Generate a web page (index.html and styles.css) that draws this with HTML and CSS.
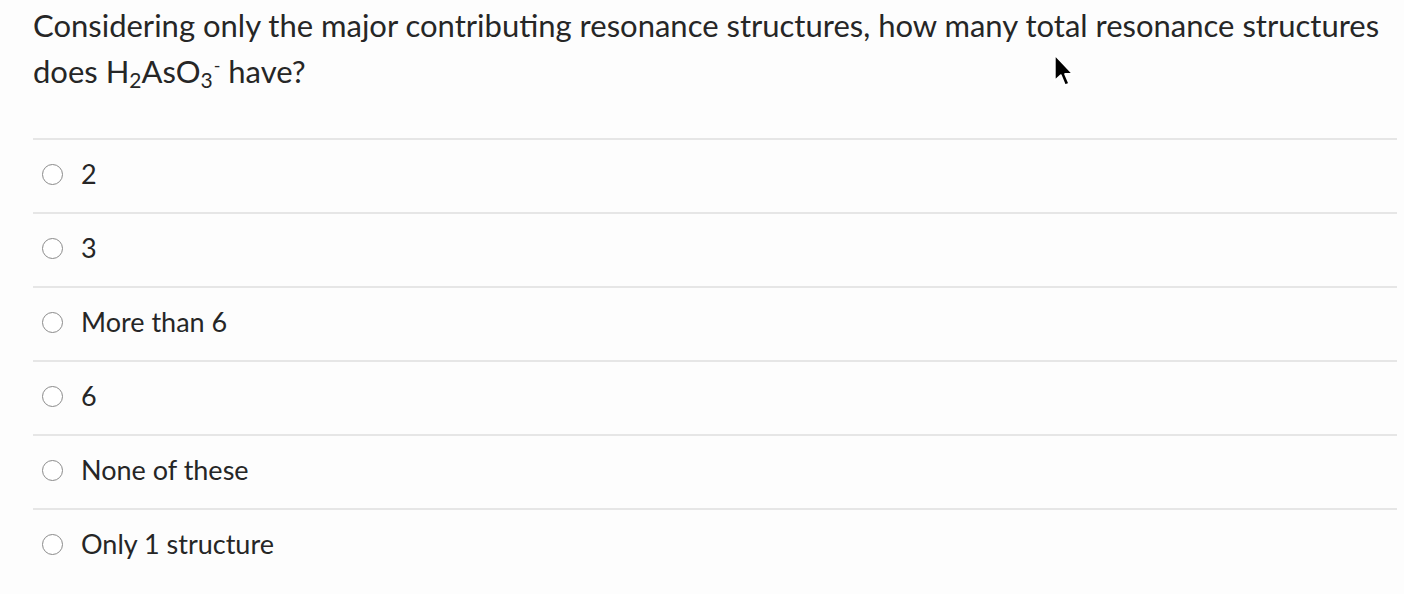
FILE: index.html
```html
<!DOCTYPE html>
<html>
<head>
<meta charset="utf-8">
<link rel="stylesheet" href="styles.css">
</head>
<body>
<div class="quiz">
  <p class="question">Considering only the major contributing resonance structures, how many total resonance structures does H<sub>2</sub>AsO<sub>3</sub><sup>-</sup> have?</p>
  <ul class="answers">
    <li class="answer"><span class="radio"></span><span class="label">2</span></li>
    <li class="answer"><span class="radio"></span><span class="label">3</span></li>
    <li class="answer"><span class="radio"></span><span class="label">More than 6</span></li>
    <li class="answer"><span class="radio"></span><span class="label">6</span></li>
    <li class="answer"><span class="radio"></span><span class="label">None of these</span></li>
    <li class="answer"><span class="radio"></span><span class="label">Only 1 structure</span></li>
  </ul>
  <svg class="cursor" width="24" height="36" viewBox="0 0 20 30">
    <path d="M1.5 1.5 L1.5 23 L6.5 18.5 L10 27 L13.5 25.5 L10 17.5 L16.5 17.5 Z" fill="#000" stroke="#fff" stroke-width="1.5" stroke-linejoin="round"/>
  </svg>
</div>
</body>
</html>
```
FILE: styles.css
```css
html, body {
  margin: 0;
  padding: 0;
  background: #fdfdfd;
}
body {
  font-family: Lato, "Noto Sans", sans-serif;
  color: #262626;
}
.quiz {
  position: relative;
  width: 1364px;
  padding: 2px 0 0 33px;
}
.question {
  margin: 0 0 44px 0;
  font-size: 31px;
  line-height: 46px;
}
.question sub {
  font-size: 21px;
  line-height: 0;
  vertical-align: -5px;
}
.question sup {
  font-size: 18px;
  line-height: 0;
  vertical-align: 11px;
  margin-left: 1px;
}
.answers {
  list-style: none;
  margin: 0;
  padding: 0;
}
.answer {
  display: flex;
  align-items: center;
  gap: 18px;
  height: 74px;
  box-sizing: border-box;
  border-top: 2px solid #e6e6e6;
  padding: 0 0 5px 9px;
  font-size: 27px;
}
.radio {
  width: 21px;
  height: 21px;
  border: 1.5px solid #8a8a8a;
  border-radius: 50%;
  background: #fff;
  box-sizing: border-box;
  margin-top: 2px;
}
.cursor {
  position: absolute;
  left: 1053px;
  top: 53px;
}
```
